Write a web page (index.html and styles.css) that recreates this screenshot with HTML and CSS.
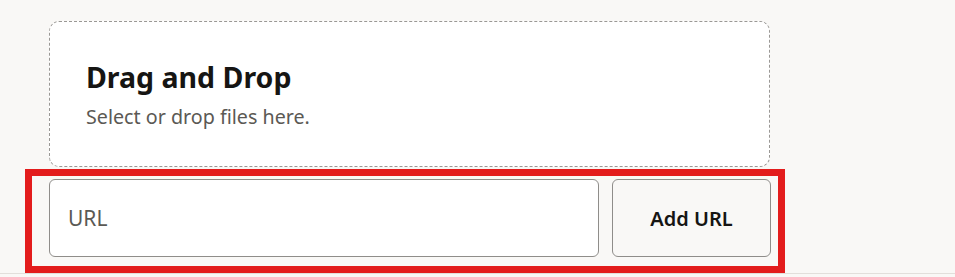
FILE: index.html
```html
<!DOCTYPE html>
<html lang="en">
    <head>
        <meta charset="utf-8">
        <link rel="stylesheet" href="styles.css">
    </head>
    <body>
        <div class="page">
            <div class="dropzone">
                <h2 class="dropTitle">Drag and Drop</h2>
                <p class="dropHint">Select or drop files here.</p>
            </div>

            <div class="highlight">
                <div class="urlRow">
                    <input class="urlInput" type="text" placeholder="URL">
                    <button class="addBtn" type="button">Add URL</button>
                </div>
            </div>
        </div>
    </body>
</html>
```

FILE: styles.css
```css
*{
    margin:0;
    padding:0;
    box-sizing: border-box;
}
body{
    background-color: #f9f8f6;
    font-family: "Noto Sans", "Open Sans", sans-serif;
    color: #161513;
}
.page{
    padding-top: 21px;
    padding-left: 25px;
    border-bottom: 1px solid #e2dfdb;
}
.dropzone{
    width: 721px;
    height: 146px;
    margin-left: 24px;
    padding: 37px 36px 0;
    background-color: #fff;
    border: 1px dashed #9a9895;
    border-radius: 10px;
}
.dropTitle{
    font-size: 28.5px;
    font-weight: 700;
    line-height: 36px;
}
.dropHint{
    margin-top: 9px;
    font-size: 19.7px;
    line-height: 26px;
    color: #5b5954;
}

.highlight{
    width: 760px;
    margin-top: 2px;
    padding: 3px 7px 9px 17px;
    border: 7px solid #e31c1c;
}
.urlRow{
    display: flex;
    gap: 13px;
    height: 78px;
}
.urlInput{
    width: 550px;
    height: 78px;
    padding: 0 18px;
    background-color: #fff;
    border: 1px solid #8f8d8a;
    border-radius: 6px;
    font-family: inherit;
    font-size: 21px;
    color: #161513;
    outline: none;
}
.urlInput::placeholder{
    color: #5b5954;
}
.addBtn{
    width: 159px;
    height: 78px;
    background-color: #f9f8f6;
    border: 1px solid #8f8d8a;
    border-radius: 6px;
    font-family: inherit;
    font-size: 20px;
    font-weight: 600;
    color: #161513;
    cursor: pointer;
}
```
